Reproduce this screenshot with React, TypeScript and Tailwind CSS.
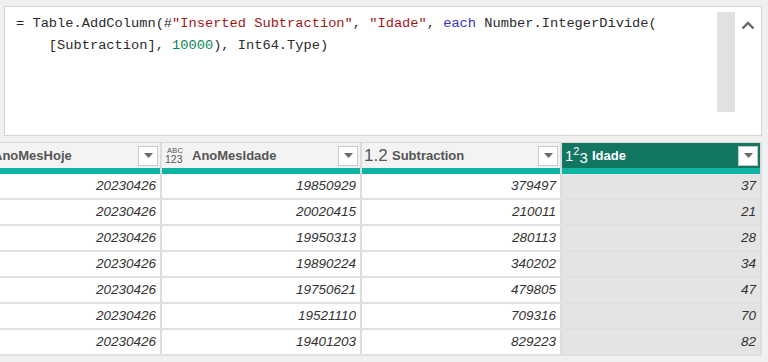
import React from "react";

const rows = [
  ["20230426", "19850929", "379497", "37"],
  ["20230426", "20020415", "210011", "21"],
  ["20230426", "19950313", "280113", "28"],
  ["20230426", "19890224", "340202", "34"],
  ["20230426", "19750621", "479805", "47"],
  ["20230426", "19521110", "709316", "70"],
  ["20230426", "19401203", "829223", "82"],
];

function Dropdown() {
  return (
    <div className="w-[20px] h-[20px] bg-white border border-[#c8c8c8] flex items-center justify-center shrink-0">
      <svg width="9" height="5" viewBox="0 0 9 5">
        <polygon points="0,0 9,0 4.5,5" fill="#6b6b6b" />
      </svg>
    </div>
  );
}

export default function App() {
  const codeFont = { fontFamily: '"Liberation Mono", "DejaVu Sans Mono", monospace' };
  return (
    <div className="w-[768px] h-[362px] bg-[#f0f0f0] overflow-hidden relative" style={{ fontFamily: '"Liberation Sans", Arial, sans-serif' }}>
      {/* formula box */}
      <div className="ml-[4px] mt-[6px] w-[758px] h-[130px] bg-white border border-[#d4d4d4] flex">
        <div className="flex-1 pl-[11px] pt-[6px] text-[13.7px] leading-[22px] text-[#2b2b2b] whitespace-pre" style={codeFont}>
          <div>
            = Table.AddColumn(#<span className="text-[#a31515]">"Inserted Subtraction"</span>, <span className="text-[#a31515]">"Idade"</span>, <span className="text-[#3333cc]">each</span> Number.IntegerDivide(
          </div>
          <div>
            {"    "}[Subtraction], <span className="text-[#098658]">10000</span>), Int64.Type)
          </div>
        </div>
        <div className="w-[18px] h-[100px] mt-[5px] bg-[#e1e1e1]"></div>
        <div className="w-[26px] flex justify-center pt-[14px]">
          <svg width="14" height="9" viewBox="0 0 14 9">
            <polyline points="1.5,7.5 7,2 12.5,7.5" fill="none" stroke="#666" strokeWidth="2.4" />
          </svg>
        </div>
      </div>

      {/* table */}
      <div className="mt-[6px] w-[762px] bg-white">
        {/* header */}
        <div className="flex h-[26px] bg-[#f3f3f3] border-t border-[#d8d8d8] text-[13px] font-bold text-[#555]">
          <div className="w-[162px] border-r-2 border-[#dcdcdc] flex items-center pr-[2px] overflow-hidden">
            <span className="ml-[-7px] flex-1 whitespace-nowrap">AnoMesHoje</span>
            <Dropdown />
          </div>
          <div className="w-[200px] border-r-2 border-[#dcdcdc] flex items-center pr-[2px]">
            <div className="w-[30px] shrink-0 pl-[3px] flex flex-col items-start leading-none font-normal text-[#555]">
              <span className="text-[7.5px] tracking-[0.2px] ml-[2px]">ABC</span>
              <span className="text-[10.5px]">123</span>
            </div>
            <span className="flex-1">AnoMesIdade</span>
            <Dropdown />
          </div>
          <div className="w-[200px] border-r-2 border-[#dcdcdc] flex items-center pr-[2px]">
            <span className="w-[30px] shrink-0 pl-[2px] text-[17px] font-normal text-[#555]">1.2</span>
            <span className="flex-1">Subtraction</span>
            <Dropdown />
          </div>
          <div className="w-[200px] bg-[#137663] border-r-2 border-[#dcdcdc] flex items-center pr-[2px] text-white">
            <span className="w-[30px] shrink-0 pl-[3px] font-normal text-[15px] leading-none flex items-center">
              1<span className="text-[11px] relative top-[-4px]">2</span><span className="relative top-[2px]">3</span>
            </span>
            <span className="flex-1">Idade</span>
            <Dropdown />
          </div>
        </div>
        {/* teal bar */}
        <div className="flex h-[6px]">
          <div className="w-[160px] bg-[#0db3a3]"></div>
          <div className="w-[2px] bg-[#dcdcdc]"></div>
          <div className="w-[198px] bg-[#0db3a3]"></div>
          <div className="w-[2px] bg-[#dcdcdc]"></div>
          <div className="w-[198px] bg-[#0db3a3]"></div>
          <div className="w-[2px] bg-[#dcdcdc]"></div>
          <div className="w-[198px] bg-[#0db3a3]"></div>
          <div className="w-[2px] bg-[#dcdcdc]"></div>
        </div>
        {/* rows */}
        {rows.map((r, i) => (
          <div key={i} className="flex h-[26px] border-b-2 border-[#e0e0e0] text-[13.5px] italic text-[#333]">
            <div className="w-[162px] border-r-2 border-[#dcdcdc] flex items-center justify-end pr-[4px]">{r[0]}</div>
            <div className="w-[200px] border-r-2 border-[#dcdcdc] flex items-center justify-end pr-[4px]">{r[1]}</div>
            <div className="w-[200px] border-r-2 border-[#dcdcdc] flex items-center justify-end pr-[4px]">{r[2]}</div>
            <div className="w-[200px] border-r-2 border-[#dcdcdc] bg-[#e4e4e4] flex items-center justify-end pr-[4px]">{r[3]}</div>
          </div>
        ))}
      </div>
    </div>
  );
}
